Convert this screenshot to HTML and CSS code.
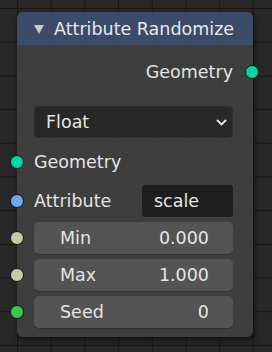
FILE: index.html
```html
<!DOCTYPE html>
<html>
<head>
<meta charset="utf-8">
<link rel="stylesheet" href="styles.css">
</head>
<body>
<div class="node">
  <div class="header">
    <svg class="collapse" width="10" height="9" viewBox="0 0 10 9"><polygon points="0,0 10,0 5,9" fill="#c3c7cf"/></svg>
    <span class="title">Attribute Randomize</span>
  </div>
  <div class="body">
    <div class="row out">
      <span class="label">Geometry</span>
      <span class="socket socket-right geo"></span>
    </div>
    <div class="dropdown">
      <span class="label">Float</span>
      <svg class="chev" width="11" height="7" viewBox="0 0 11 7"><polyline points="1,1 5.5,5.5 10,1" fill="none" stroke="#e8e8e8" stroke-width="1.8"/></svg>
    </div>
    <div class="row in gap-geo">
      <span class="socket socket-left geo"></span>
      <span class="label">Geometry</span>
    </div>
    <div class="row in attr">
      <span class="socket socket-left str"></span>
      <span class="label">Attribute</span>
      <span class="textfield">scale</span>
    </div>
    <div class="row numfield first">
      <span class="socket socket-left flt"></span>
      <span class="label">Min</span>
      <span class="value">0.000</span>
    </div>
    <div class="row numfield">
      <span class="socket socket-left flt"></span>
      <span class="label">Max</span>
      <span class="value">1.000</span>
    </div>
    <div class="row numfield">
      <span class="socket socket-left int"></span>
      <span class="label">Seed</span>
      <span class="value">0</span>
    </div>
  </div>
</div>
</body>
</html>
```

FILE: styles.css
```css
html, body {
  margin: 0;
  padding: 0;
}
body {
  width: 272px;
  height: 352px;
  overflow: hidden;
  background-color: #282828;
  background-image:
    linear-gradient(to right, #181818 1px, transparent 1px),
    linear-gradient(to bottom, #181818 1px, transparent 1px);
  background-size: 33.7px 33.7px;
  background-position: 17px 8px;
  font-family: "DejaVu Sans", "Liberation Sans", sans-serif;
  font-size: 17.5px;
  color: #e4e4e4;
  padding-top: 12px;
  box-sizing: border-box;
}
.node {
  margin-left: 17px;
  width: 236px;
  border-radius: 6px;
  background: rgba(64, 64, 64, 0.94);
  box-shadow: 1px 3px 6px rgba(0, 0, 0, 0.6);
}
.header {
  height: 33px;
  box-sizing: border-box;
  padding-top: 1px;
  background: #3a4c6a;
  border-radius: 6px 6px 0 0;
  display: flex;
  align-items: center;
  color: #e8e8e8;
}
.collapse {
  margin-left: 17px;
  margin-right: 10px;
  flex: none;
}
.title {
  line-height: 31px;
  white-space: nowrap;
}
.body {
  padding: 11px 20px 9px 17px;
  display: flex;
  flex-direction: column;
}
.row {
  position: relative;
  height: 32px;
  display: flex;
  align-items: center;
  line-height: 32px;
  white-space: nowrap;
}
.row.out {
  justify-content: flex-end;
}
.socket {
  position: absolute;
  top: 9px;
  width: 12px;
  height: 12px;
  border-radius: 50%;
  border: 1px solid #141414;
}
.socket-left {
  left: -24px;
}
.socket-right {
  right: -26px;
}
.geo { background: #00d6a3; }
.str { background: #6fa8f0; }
.flt { background: #c8c9a2; }
.int { background: #3ec74d; }

.dropdown {
  margin-top: 18px;
  height: 32px;
  box-sizing: border-box;
  background: #282828;
  border: 1px solid #2f2f2f;
  border-radius: 4px;
  display: flex;
  align-items: center;
  justify-content: space-between;
  padding: 0 5px 0 11px;
  line-height: 30px;
}
.chev {
  margin-top: 1px;
}
.gap-geo {
  margin-top: 8px;
}
.attr {
  margin-top: 7px;
  justify-content: space-between;
}
.textfield {
  width: 91px;
  height: 32px;
  box-sizing: border-box;
  background: #1e1e1e;
  border-radius: 3px;
  padding-left: 12px;
  line-height: 32px;
  color: #e6e6e6;
}
.numfield {
  margin-top: 5px;
  background: #545454;
  border-radius: 5px;
  padding: 0 24px 0 26px;
  justify-content: space-between;
  box-shadow: 0 1px 0 rgba(0, 0, 0, 0.18);
}
.numfield .socket-left {
  left: -24px;
}
.numfield.first {
  margin-top: 5px;
}
.value {
  color: #e6e6e6;
}
```
